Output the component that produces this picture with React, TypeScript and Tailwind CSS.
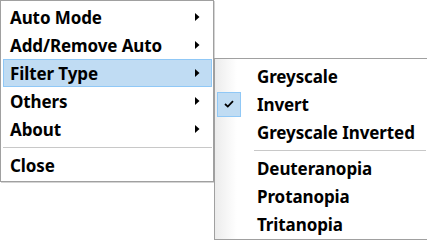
import { type FC } from "react";

const font = { fontFamily: '"Noto Sans", "Open Sans", sans-serif' };

const Arrow: FC = () => (
  <svg width="5" height="8" viewBox="0 0 5 8" className="shrink-0">
    <path d="M0 0 L4.5 4 L0 8 Z" fill="#000" />
  </svg>
);

interface ItemProps {
  label: string;
  sub?: boolean;
  active?: boolean;
}

const MainItem: FC<ItemProps> = ({ label, sub, active }) => (
  <div
    className={`flex h-[28px] items-center justify-between pl-[6px] pr-[11px] border ${
      active ? "bg-[#c0dcf3] border-[#90c8f6]" : "border-transparent"
    }`}
  >
    <span className="text-[17px] font-bold text-black leading-none tracking-[-0.1px]">{label}</span>
    {sub && <Arrow />}
  </div>
);

const SubItem: FC<{ label: string; checked?: boolean }> = ({ label, checked }) => (
  <div className="flex h-[28px] items-center">
    <div className="w-[40px] flex items-center">
      {checked && (
        <div className="w-[24px] h-[25px] bg-[#c0dcf3] border border-[#90c8f6] flex items-center justify-center">
          <svg width="10" height="8" viewBox="0 0 10 8">
            <path d="M1 4 L3.8 6.6 L9 1.2" fill="none" stroke="#000" strokeWidth="1.8" />
          </svg>
        </div>
      )}
    </div>
    <span className="text-[17px] font-bold text-black leading-none tracking-[-0.1px]">{label}</span>
  </div>
);

export default function App() {
  return (
    <div className="w-[427px] h-[240px] bg-white overflow-hidden flex items-start" style={font}>
      <div className="w-[214px] h-[182px] border border-[#a0a0a0] bg-white p-[2px] pr-[1px] shadow-[1px_1px_0_#d4d4d4]">
        <MainItem label="Auto Mode" sub />
        <MainItem label="Add/Remove Auto" sub />
        <MainItem label="Filter Type" sub active />
        <MainItem label="Others" sub />
        <MainItem label="About" sub />
        <div className="h-[8px] flex items-center">
          <div className="h-px w-full bg-[#c8c8c8]" />
        </div>
        <MainItem label="Close" />
      </div>
      <div className="mt-[58px] h-[182px] flex-1 -mr-[2px] border border-[#a0a0a0] p-[2px] pt-[3px] bg-[linear-gradient(to_right,#ececec,#ffffff_22px)]">
        <SubItem label="Greyscale" />
        <SubItem label="Invert" checked />
        <SubItem label="Greyscale Inverted" />
        <div className="h-[8px] flex items-center pl-[37px]">
          <div className="h-px w-full bg-[#c8c8c8]" />
        </div>
        <SubItem label="Deuteranopia" />
        <SubItem label="Protanopia" />
        <SubItem label="Tritanopia" />
      </div>
    </div>
  );
}
